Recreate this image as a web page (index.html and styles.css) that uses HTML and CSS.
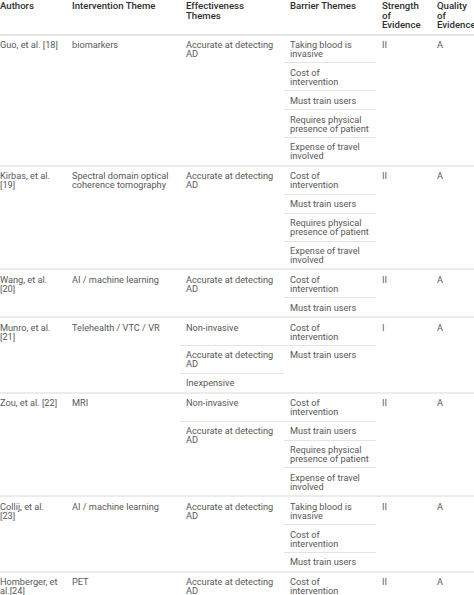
FILE: index.html
```
<!DOCTYPE html>
<html>
<head>
<meta charset="utf-8">
<link rel="stylesheet" href="styles.css">
</head>
<body>
<table class="tbl">
<colgroup>
<col class="c-auth"><col class="c-int"><col class="c-eff"><col class="c-bar"><col class="c-str"><col class="c-qual">
</colgroup>
<thead>
<tr><th class="a">Authors</th><th>Intervention Theme</th><th>Effectiveness<br>Themes</th><th>Barrier Themes</th><th>Strength<br>of<br>Evidence</th><th>Quality<br>of<br>Evidence</th></tr>
</thead>
<tbody>
<tr><td class="a" rowspan="5">Guo, et al. [18]</td><td rowspan="5">biomarkers</td><td rowspan="5">Accurate at detecting AD</td><td class="sb">Taking blood is invasive</td><td rowspan="5">II</td><td rowspan="5">A</td></tr>
<tr><td class="sb">Cost of intervention</td></tr>
<tr><td class="sb">Must train users</td></tr>
<tr><td class="sb">Requires physical presence of patient</td></tr>
<tr><td>Expense of travel involved</td></tr>
</tbody>
<tbody>
<tr><td class="a" rowspan="4">Kirbas, et al. [19]</td><td rowspan="4">Spectral domain optical coherence tomography</td><td rowspan="4">Accurate at detecting AD</td><td class="sb">Cost of intervention</td><td rowspan="4">II</td><td rowspan="4">A</td></tr>
<tr><td class="sb">Must train users</td></tr>
<tr><td class="sb">Requires physical presence of patient</td></tr>
<tr><td>Expense of travel involved</td></tr>
</tbody>
<tbody>
<tr><td class="a" rowspan="2">Wang, et al. [20]</td><td rowspan="2">AI / machine learning</td><td rowspan="2">Accurate at detecting AD</td><td class="sb">Cost of intervention</td><td rowspan="2">II</td><td rowspan="2">A</td></tr>
<tr><td>Must train users</td></tr>
</tbody>
<tbody>
<tr><td class="a" rowspan="3">Munro, et al. [21]</td><td rowspan="3">Telehealth / VTC / VR</td><td class="sb">Non-invasive</td><td class="sb">Cost of intervention</td><td rowspan="3">I</td><td rowspan="3">A</td></tr>
<tr><td class="sb">Accurate at detecting AD</td><td rowspan="2">Must train users</td></tr>
<tr><td>Inexpensive</td></tr>
</tbody>
<tbody>
<tr><td class="a" rowspan="4">Zou, et al. [22]</td><td rowspan="4">MRI</td><td class="sb">Non-invasive</td><td class="sb">Cost of intervention</td><td rowspan="4">II</td><td rowspan="4">A</td></tr>
<tr><td rowspan="3">Accurate at detecting AD</td><td class="sb">Must train users</td></tr>
<tr><td class="sb">Requires physical presence of patient</td></tr>
<tr><td>Expense of travel involved</td></tr>
</tbody>
<tbody>
<tr><td class="a" rowspan="3">Collij, et al. [23]</td><td rowspan="3">AI / machine learning</td><td rowspan="3">Accurate at detecting AD</td><td class="sb">Taking blood is invasive</td><td rowspan="3">II</td><td rowspan="3">A</td></tr>
<tr><td class="sb">Cost of intervention</td></tr>
<tr><td>Must train users</td></tr>
</tbody>
<tbody>
<tr><td class="a" rowspan="2">Homberger, et al.[24]</td><td rowspan="2">PET</td><td rowspan="2">Accurate at detecting AD</td><td class="sb">Cost of intervention</td><td rowspan="2">II</td><td rowspan="2">A</td></tr>
<tr><td>Must train users</td></tr>
</tbody>
</table>
</body>
</html>
```
FILE: styles.css
```
html, body {
  margin: 0;
  padding: 0;
  background: #ffffff;
  overflow: hidden;
}
body {
  width: 474px;
  height: 595px;
}
.tbl {
  border-collapse: collapse;
  table-layout: fixed;
  width: 496px;
  font-family: Roboto, "Liberation Sans", Arial, sans-serif;
  font-size: 9.2px;
  line-height: 9px;
  color: #585858;
}
.c-auth { width: 66px; }
.c-int { width: 114px; }
.c-eff { width: 104px; }
.c-bar { width: 92px; }
.c-str { width: 55px; }
.c-qual { width: 65px; }
.tbl th {
  text-align: left;
  vertical-align: top;
  font-weight: 500;
  font-size: 9.6px;
  line-height: 9.5px;
  color: #2e2e2e;
  padding: 1px 6px 4px 6px;
  border-bottom: 2px solid #e6e6e6;
}
.tbl td {
  vertical-align: top;
  padding: 4.45px 6px 4.45px 6px;
}
.tbl .a {
  padding-left: 0;
}
.tbl tbody {
  border-bottom: 2px solid #ececec;
}
.tbl td.sb {
  border-bottom: 1px solid #e4e4e4;
}
```
